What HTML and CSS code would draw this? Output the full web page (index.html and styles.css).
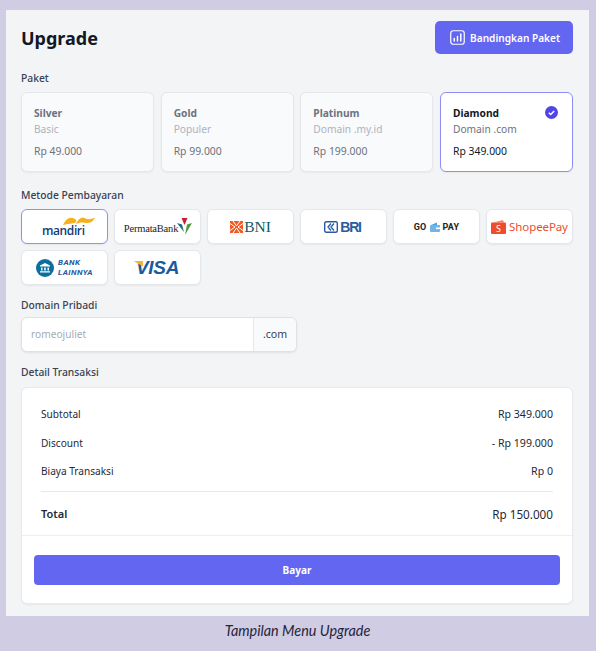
FILE: index.html
```html
<!DOCTYPE html>
<html lang="en">
<head>
    <meta charset="UTF-8">
    <meta name="viewport" content="width=device-width, initial-scale=1.0">
    <title>Upgrade</title>
    <link rel="stylesheet" href="styles.css">
</head>
<body>
    <div class="panel">
        <div class="panel-header">
            <h1>Upgrade</h1>
            <button class="compare-btn">
                <svg width="15" height="15" viewBox="0 0 15 15" fill="none" stroke="currentColor">
                    <rect x="0.75" y="0.75" width="13.5" height="13.5" rx="2.5" stroke-width="1.2"/>
                    <path d="M4.2 11V8.5M7.5 11V6.6M10.8 11V4" stroke-width="1.5" stroke-linecap="round"/>
                </svg>
                Bandingkan Paket
            </button>
        </div>

        <div class="section-label">Paket</div>
        <div class="plans">
            <div class="plan">
                <div class="plan-name">Silver</div>
                <div class="plan-desc">Basic</div>
                <div class="plan-price">Rp 49.000</div>
            </div>
            <div class="plan">
                <div class="plan-name">Gold</div>
                <div class="plan-desc">Populer</div>
                <div class="plan-price">Rp 99.000</div>
            </div>
            <div class="plan">
                <div class="plan-name">Platinum</div>
                <div class="plan-desc">Domain .my.id</div>
                <div class="plan-price">Rp 199.000</div>
            </div>
            <div class="plan selected">
                <svg class="plan-check" width="13" height="13" viewBox="0 0 13 13">
                    <circle cx="6.5" cy="6.5" r="6.5" fill="#4f46e5"/>
                    <path d="M3.8 6.7l1.9 1.8 3.5-3.6" fill="none" stroke="#fff" stroke-width="1.5"/>
                </svg>
                <div class="plan-name">Diamond</div>
                <div class="plan-desc">Domain .com</div>
                <div class="plan-price">Rp 349.000</div>
            </div>
        </div>

        <div class="section-label">Metode Pembayaran</div>
        <div class="methods">
            <div class="method selected">
                <div class="logo-mandiri">
                    <svg width="32" height="8" viewBox="0 0 32 8">
                        <path d="M0 8C3 1.500 7 -0.500 11 1.500C14.500 3 14 5.500 10 6.200C6 6.700 3 7.200 0 8Z" fill="#f5b01a"/>
                        <path d="M13 7C16 1 19 -0.500 22 1.200C25 2.800 28 2.200 32 0.500C30 5 26 6.800 22 5.800C18.500 5 16 5.500 13 7Z" fill="#f5b01a"/>
                    </svg>
                    <span>mandiri</span>
                </div>
            </div>
            <div class="method">
                <div class="logo-permata">
                    <span>PermataBank</span>
                    <svg width="15" height="17" viewBox="0 0 15 17">
                        <path d="M4.5 0h6L7.500 7z" fill="#c8202f"/>
                        <path d="M0 5l5 1.500L7 14z" fill="#1d6d72"/>
                        <path d="M15 5l-5 1.500L8 17z" fill="#4f9a3a"/>
                    </svg>
                </div>
            </div>
            <div class="method">
                <div class="logo-bni">
                    <svg width="13" height="12" viewBox="0 0 13 12">
                        <rect width="13" height="12" fill="#f15a23"/>
                        <path d="M0 2.500l5 3.500L0 9.500M13 2.500L8 6l5 3.500M3 0l3.500 5L10 0M3 12l3.500-5L10 12" fill="none" stroke="#fff" stroke-width="1"/>
                    </svg>
                    <span>BNI</span>
                </div>
            </div>
            <div class="method">
                <div class="logo-bri">
                    <svg width="14" height="12" viewBox="0 0 14 12" fill="none" stroke="#2a5ba0">
                        <rect x="0.700" y="0.700" width="12.600" height="10.600" rx="1.500" stroke-width="1.400"/>
                        <path d="M7 2.500L4 6l3 3.500M10 2.500L7 6l3 3.500" stroke-width="1.300"/>
                    </svg>
                    <span>BRI</span>
                </div>
            </div>
            <div class="method">
                <div class="logo-gopay">
                    <span>GO</span>
                    <svg width="10" height="10" viewBox="0 0 10 10">
                        <path d="M1 3L7 0.500V3z" fill="#4aa3df"/>
                        <rect y="3" width="10" height="7" rx="1" fill="#6db6e6"/>
                        <rect x="6" y="5.500" width="4" height="1.600" fill="#fff"/>
                    </svg>
                    <span>PAY</span>
                </div>
            </div>
            <div class="method">
                <div class="logo-shopee">
                    <svg width="15" height="14" viewBox="0 0 15 14">
                        <path d="M2 2.500L12 0l1 2.500z" fill="#f7886c"/>
                        <rect y="2.500" width="15" height="11.500" rx="1" fill="#ee4d2d"/>
                        <text x="7.500" y="11.800" text-anchor="middle" class="shopee-s">S</text>
                    </svg>
                    <span>ShopeePay</span>
                </div>
            </div>
            <div class="method">
                <div class="logo-other">
                    <svg width="18" height="18" viewBox="0 0 18 18">
                        <circle cx="9" cy="9" r="9" fill="#0d6f9c"/>
                        <path d="M9 4L4 6.500V7.500H14V6.500zM5 8.500H6.500V11.500H5zM8.200 8.500H9.800V11.500H8.200zM11.500 8.500H13V11.500H11.500zM4 12.200H14V13.400H4z" fill="#fff"/>
                    </svg>
                    <span>BANK<br>LAINNYA</span>
                </div>
            </div>
            <div class="method">
                <div class="logo-visa">VISA</div>
            </div>
        </div>

        <div class="section-label domain-label">Domain Pribadi</div>
        <div class="domain-field">
            <div class="domain-input">romeojuliet</div>
            <div class="domain-suffix">.com</div>
        </div>

        <div class="section-label detail-label">Detail Transaksi</div>
        <div class="detail-card">
            <div class="detail-body">
                <div class="detail-row"><span class="row-label">Subtotal</span><span>Rp 349.000</span></div>
                <div class="detail-row"><span class="row-label">Discount</span><span>- Rp 199.000</span></div>
                <div class="detail-row"><span class="row-label">Biaya Transaksi</span><span>Rp 0</span></div>
                <div class="detail-total"><span class="total-label">Total</span><span>Rp 150.000</span></div>
            </div>
            <div class="detail-footer">
                <button class="pay-btn">Bayar</button>
            </div>
        </div>
    </div>
    <div class="caption">Tampilan Menu Upgrade</div>
</body>
</html>
```

FILE: styles.css
```css
* {
    margin: 0;
    padding: 0;
    box-sizing: border-box;
}

body {
    font-family: "Noto Sans", Arial, sans-serif;
    background-color: #d0cce4;
    padding: 10px 7px 0 6px;
    color: #111827;
}

.panel {
    background-color: #f3f4f6;
    height: 606px;
    padding: 11px 16px 0 15px;
}

.panel-header {
    display: flex;
    justify-content: space-between;
    align-items: center;
    height: 33px;
    margin-bottom: 16px;
}

.panel-header h1 {
    font-size: 18px;
    font-weight: 700;
    color: #111827;
}

.compare-btn {
    display: flex;
    align-items: center;
    gap: 5px;
    height: 33px;
    padding: 0 13px 0 15px;
    background-color: #6366f1;
    color: #fff;
    border: none;
    border-radius: 5px;
    font-family: inherit;
    font-size: 10.1px;
    font-weight: 600;
}

.section-label {
    font-size: 10.3px;
    font-weight: 500;
    line-height: 17px;
    color: #374151;
    margin-bottom: 5px;
}

.domain-label {
    margin-bottom: 3px;
}

.detail-label {
    margin-bottom: 6px;
}

.plans {
    display: grid;
    grid-template-columns: repeat(4, 1fr);
    gap: 6.67px;
    margin-bottom: 15px;
}

.plan {
    position: relative;
    height: 80px;
    padding: 12px 12px;
    background-color: #f9fafb;
    border: 1px solid #e5e7eb;
    border-radius: 6px;
    box-shadow: 0 1px 2px rgba(0,0,0,0.05);
    font-size: 10.2px;
    color: #6b7280;
}

.plan-name {
    font-weight: 700;
    line-height: 16px;
}

.plan-desc {
    line-height: 16px;
    color: #adb2bb;
}

.plan-price {
    margin-top: 6px;
    font-size: 10.4px;
    line-height: 16px;
}

.plan.selected {
    background-color: #fff;
    border-color: #8f8ff5;
    color: #111827;
}

.plan.selected .plan-desc {
    color: #6b7280;
}

.plan-check {
    position: absolute;
    top: 13px;
    right: 14px;
}

.methods {
    display: grid;
    grid-template-columns: repeat(6, 1fr);
    grid-auto-rows: 35px;
    gap: 6px;
    margin-bottom: 12px;
}

.method {
    display: flex;
    align-items: center;
    justify-content: center;
    background-color: #fff;
    border: 1px solid #e5e7eb;
    border-radius: 6px;
    box-shadow: 0 1px 2px rgba(0,0,0,0.06);
    overflow: hidden;
}

.method.selected {
    border-color: #8f8ff5;
}

.logo-mandiri {
    display: flex;
    flex-direction: column;
    align-items: flex-start;
    width: 53px;
    margin-left: 8px;
    font-family: "Open Sans", sans-serif;
    font-size: 12px;
    font-weight: 600;
    line-height: 11px;
    letter-spacing: -0.4px;
    color: #123c76;
}

.logo-mandiri svg {
    margin-left: 21px;
}

.logo-permata {
    display: flex;
    align-items: flex-end;
    gap: 0;
    margin-left: 1px;
    font-family: "Liberation Serif", serif;
    font-size: 10.5px;
    line-height: 13px;
    letter-spacing: -0.2px;
    color: #222;
}

.logo-permata span {
    margin-right: -1px;
}

.logo-bni {
    display: flex;
    align-items: center;
    gap: 1px;
    font-family: "Liberation Serif", serif;
    font-size: 15.5px;
    color: #0f5a63;
}

.logo-bri {
    display: flex;
    align-items: center;
    gap: 2px;
    margin-right: 2px;
    font-family: "Liberation Sans", sans-serif;
    font-size: 14px;
    font-weight: 700;
    letter-spacing: -1.2px;
    color: #2a5ba0;
}

.logo-gopay {
    display: flex;
    align-items: center;
    gap: 3px;
    font-family: Roboto, sans-serif;
    font-size: 9px;
    font-weight: 700;
    letter-spacing: 0.2px;
    color: #222;
}

.logo-shopee {
    display: flex;
    align-items: center;
    gap: 3px;
    font-size: 11.5px;
    letter-spacing: -0.1px;
    color: #ee4d2d;
}

.shopee-s {
    font-size: 9px;
    fill: #fff;
}

.logo-other {
    display: flex;
    align-items: center;
    gap: 4px;
    font-family: Roboto, sans-serif;
    font-size: 8px;
    font-weight: 700;
    font-style: italic;
    line-height: 9.5px;
    letter-spacing: 0.4px;
    color: #1a5aa6;
}

.logo-visa {
    position: relative;
    font-family: "Liberation Sans", sans-serif;
    font-size: 19px;
    font-weight: 700;
    font-style: italic;
    letter-spacing: -0.3px;
    color: #1a5b9e;
}

.logo-visa::before {
    content: "";
    position: absolute;
    top: 4px;
    left: -3px;
    width: 10px;
    height: 6px;
    background-color: #f3b52c;
    clip-path: polygon(0 0, 100% 0, 100% 100%);
}

.domain-field {
    display: flex;
    width: 276px;
    height: 35px;
    margin-bottom: 12px;
    background-color: #fff;
    border: 1px solid #dfe1e6;
    border-radius: 6px;
    box-shadow: 0 1px 2px rgba(0,0,0,0.08);
    font-size: 10.2px;
    line-height: 33px;
}

.domain-input {
    flex: 1;
    padding-left: 9px;
    color: #a5abb5;
}

.domain-suffix {
    width: 43px;
    text-align: center;
    font-size: 10.6px;
    background-color: #f9fafb;
    border-left: 1px solid #e5e7eb;
    border-radius: 0 6px 6px 0;
    color: #374151;
}

.detail-card {
    background-color: #fff;
    border: 1px solid #e9eaee;
    border-radius: 6px;
    box-shadow: 0 1px 2px rgba(0,0,0,0.05);
    height: 217px;
}

.detail-body {
    padding: 12px 19px 0 19px;
    height: 148px;
    border-bottom: 1px solid #eceef1;
}

.detail-row {
    display: flex;
    justify-content: space-between;
    height: 28.5px;
    line-height: 28.5px;
    font-size: 10.6px;
    color: #1f2937;
}

.row-label {
    font-size: 10.1px;
}

.detail-total {
    display: flex;
    justify-content: space-between;
    margin-top: 5px;
    border-top: 1px solid #e5e7eb;
    padding-top: 13px;
    font-size: 11.7px;
    line-height: 18px;
    color: #1f2937;
}

.total-label {
    font-size: 11px;
    font-weight: 600;
}

.detail-footer {
    padding: 19px 12px 0 12px;
}

.pay-btn {
    display: block;
    width: 100%;
    height: 30px;
    background-color: #6366f1;
    color: #fff;
    border: none;
    border-radius: 4px;
    font-family: inherit;
    font-size: 10px;
    font-weight: 700;
}

.caption {
    margin-top: 6px;
    text-align: center;
    font-family: Lato, sans-serif;
    font-size: 14.4px;
    font-style: italic;
    line-height: 18px;
    color: #26243a;
}
```
